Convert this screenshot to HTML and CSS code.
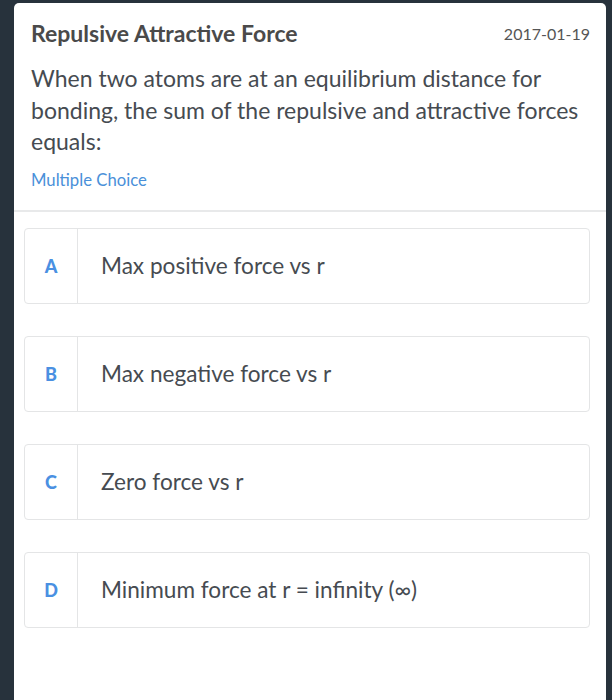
FILE: index.html
```html
<!DOCTYPE html>
<html>
<head>
<meta charset="utf-8">
<link rel="stylesheet" href="styles.css">
</head>
<body>
<div class="card">
  <div class="head">
    <div class="title-row">
      <span class="title">Repulsive Attractive Force</span>
      <span class="date">2017-01-19</span>
    </div>
    <p class="question">When two atoms are at an equilibrium distance for bonding, the sum of the repulsive and attractive forces equals:</p>
    <div class="kind">Multiple Choice</div>
  </div>
  <div class="options">
    <div class="option"><div class="letter">A</div><div class="text">Max positive force vs r</div></div>
    <div class="option"><div class="letter">B</div><div class="text">Max negative force vs r</div></div>
    <div class="option"><div class="letter">C</div><div class="text">Zero force vs r</div></div>
    <div class="option"><div class="letter">D</div><div class="text">Minimum force at r = infinity (∞)</div></div>
  </div>
</div>
</body>
</html>
```

FILE: styles.css
```css
html, body {
  margin: 0;
  padding: 0;
  background: #27323c;
  height: 700px;
  overflow: hidden;
}
.card {
  margin: 3px 6px 0 14px;
  background: #fff;
  border-radius: 5px 5px 0 0;
  height: 720px;
  font-family: "Lato", "Open Sans", sans-serif;
  color: #464b51;
}
.head {
  padding: 16px 16px 19px 17px;
  border-bottom: 2px solid #e8e9ea;
}
.title-row {
  display: flex;
  justify-content: space-between;
  align-items: center;
  height: 28px;
}
.title {
  font-size: 23px;
  font-weight: 700;
  color: #4a4a4a;
}
.date {
  font-size: 16px;
  color: #555;
}
.question {
  margin: 16px 0 0;
  font-size: 23px;
  line-height: 31.5px;
  color: #464b51;
}
.kind {
  margin-top: 11px;
  font-size: 16.7px;
  color: #4a90d9;
  line-height: 22px;
}
.options {
  padding: 16px 16px 0 10px;
  display: flex;
  flex-direction: column;
  gap: 32px;
}
.option {
  display: flex;
  height: 74px;
  border: 1px solid #e4e5e6;
  border-radius: 4px;
}
.letter {
  width: 52px;
  flex: none;
  border-right: 1px solid #e4e5e6;
  display: flex;
  align-items: center;
  justify-content: center;
  font-size: 18px;
  font-weight: 900;
  color: #4a90e2;
}
.text {
  display: flex;
  align-items: center;
  padding-left: 23px;
  font-size: 22.6px;
  color: #464b51;
}
```
